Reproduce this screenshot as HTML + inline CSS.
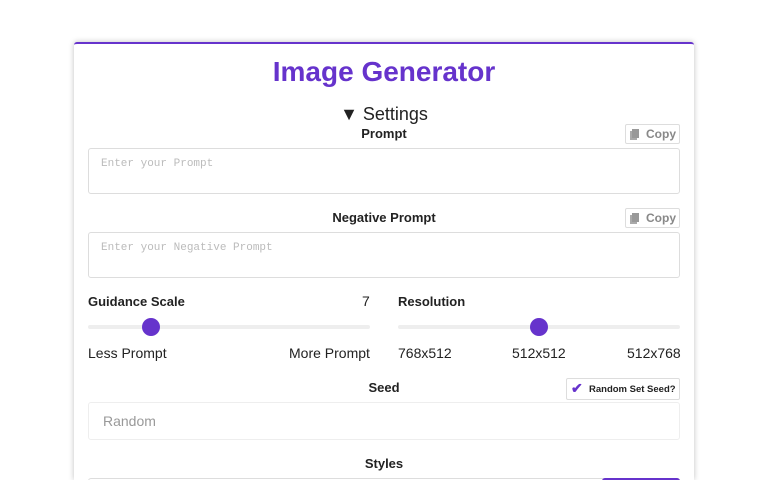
<!DOCTYPE html>
<html style="height:480px;overflow:hidden"><head><meta charset="utf-8"><style>
*{box-sizing:border-box;margin:0;padding:0}
body{width:768px;height:480px;overflow:hidden;background:#fff;font-family:"Liberation Sans",sans-serif;position:relative;color:#222}
.card{position:absolute;left:74px;top:42px;width:620px;height:438px;overflow:hidden;background:#fff;border-top:2px solid #6633cc;border-radius:3px 3px 0 0;box-shadow:0 0 6px rgba(0,0,0,.25)}
.a{position:absolute;white-space:nowrap}
h1{position:absolute;left:0;width:620px;top:12px;text-align:center;font-size:28px;color:#6633cc;font-weight:bold}
.lbl{font-size:13px;font-weight:bold;color:#222}
.copy{position:absolute;width:55px;height:20px;border:1px solid #ddd;border-radius:2px;font-size:12px;font-weight:bold;color:#888;padding:2px 0 0 20px}
.copy:before{content:"";position:absolute;left:6px;top:4px;width:7px;height:9px;background:#999;box-shadow:-2px 2px 0 #aaa}
.ta{position:absolute;left:14px;width:592px;height:46px;border:1px solid #ddd;border-radius:3px;font-family:"Liberation Mono",monospace;font-size:11px;color:#bbb;padding:9px 12px}
.track{position:absolute;height:4px;background:#eee;border-radius:2px}
.thumb{position:absolute;width:18px;height:18px;border-radius:50%;background:#6633cc}
.t14{font-size:14px;color:#222}
</style></head><body>
<div class="card">
<h1>Image Generator</h1>
<div class="a" style="left:0;width:620px;top:60px;text-align:center;font-size:18px">▼ Settings</div>
<div class="a lbl" style="left:0;width:620px;top:82px;text-align:center">Prompt</div>
<div class="copy" style="left:551px;top:80px">Copy</div>
<div class="ta" style="top:104px">Enter your Prompt</div>
<div class="a lbl" style="left:0;width:620px;top:166px;text-align:center">Negative Prompt</div>
<div class="copy" style="left:551px;top:164px">Copy</div>
<div class="ta" style="top:188px">Enter your Negative Prompt</div>
<div class="a lbl" style="left:14px;top:250px">Guidance Scale</div>
<div class="a t14" style="left:288px;top:249px">7</div>
<div class="a lbl" style="left:324px;top:250px">Resolution</div>
<div class="track" style="left:14px;width:282px;top:281px"></div>
<div class="thumb" style="left:68px;top:274px"></div>
<div class="track" style="left:324px;width:282px;top:281px"></div>
<div class="thumb" style="left:456px;top:274px"></div>
<div class="a t14" style="left:14px;top:301px">Less Prompt</div>
<div class="a t14" style="left:215px;top:301px">More Prompt</div>
<div class="a t14" style="left:324px;top:301px">768x512</div>
<div class="a t14" style="left:438px;top:301px">512x512</div>
<div class="a t14" style="left:553px;top:301px">512x768</div>
<div class="a lbl" style="left:0;width:620px;top:336px;text-align:center">Seed</div>
<div class="a" style="left:492px;top:334px;width:114px;height:22px;border:1px solid #ddd;border-radius:2px;font-size:9.5px;font-weight:bold;padding:5px 0 0 22px">Random Set Seed?<span style="position:absolute;left:4px;top:1px;color:#6633cc;font-size:14px">✔</span></div>
<div class="a" style="left:14px;top:358px;width:592px;height:38px;border:1px solid #eee;border-radius:3px;font-size:14px;color:#999;padding:10px 14px">Random</div>
<div class="a lbl" style="left:0;width:620px;top:412px;text-align:center">Styles</div>
<div class="a" style="left:14px;top:434px;width:592px;height:30px;border:1px solid #ddd;border-radius:3px"></div>
<div class="a" style="left:528px;top:434px;width:78px;height:30px;background:#6633cc;border-radius:3px"></div>
</div>
</body></html>
